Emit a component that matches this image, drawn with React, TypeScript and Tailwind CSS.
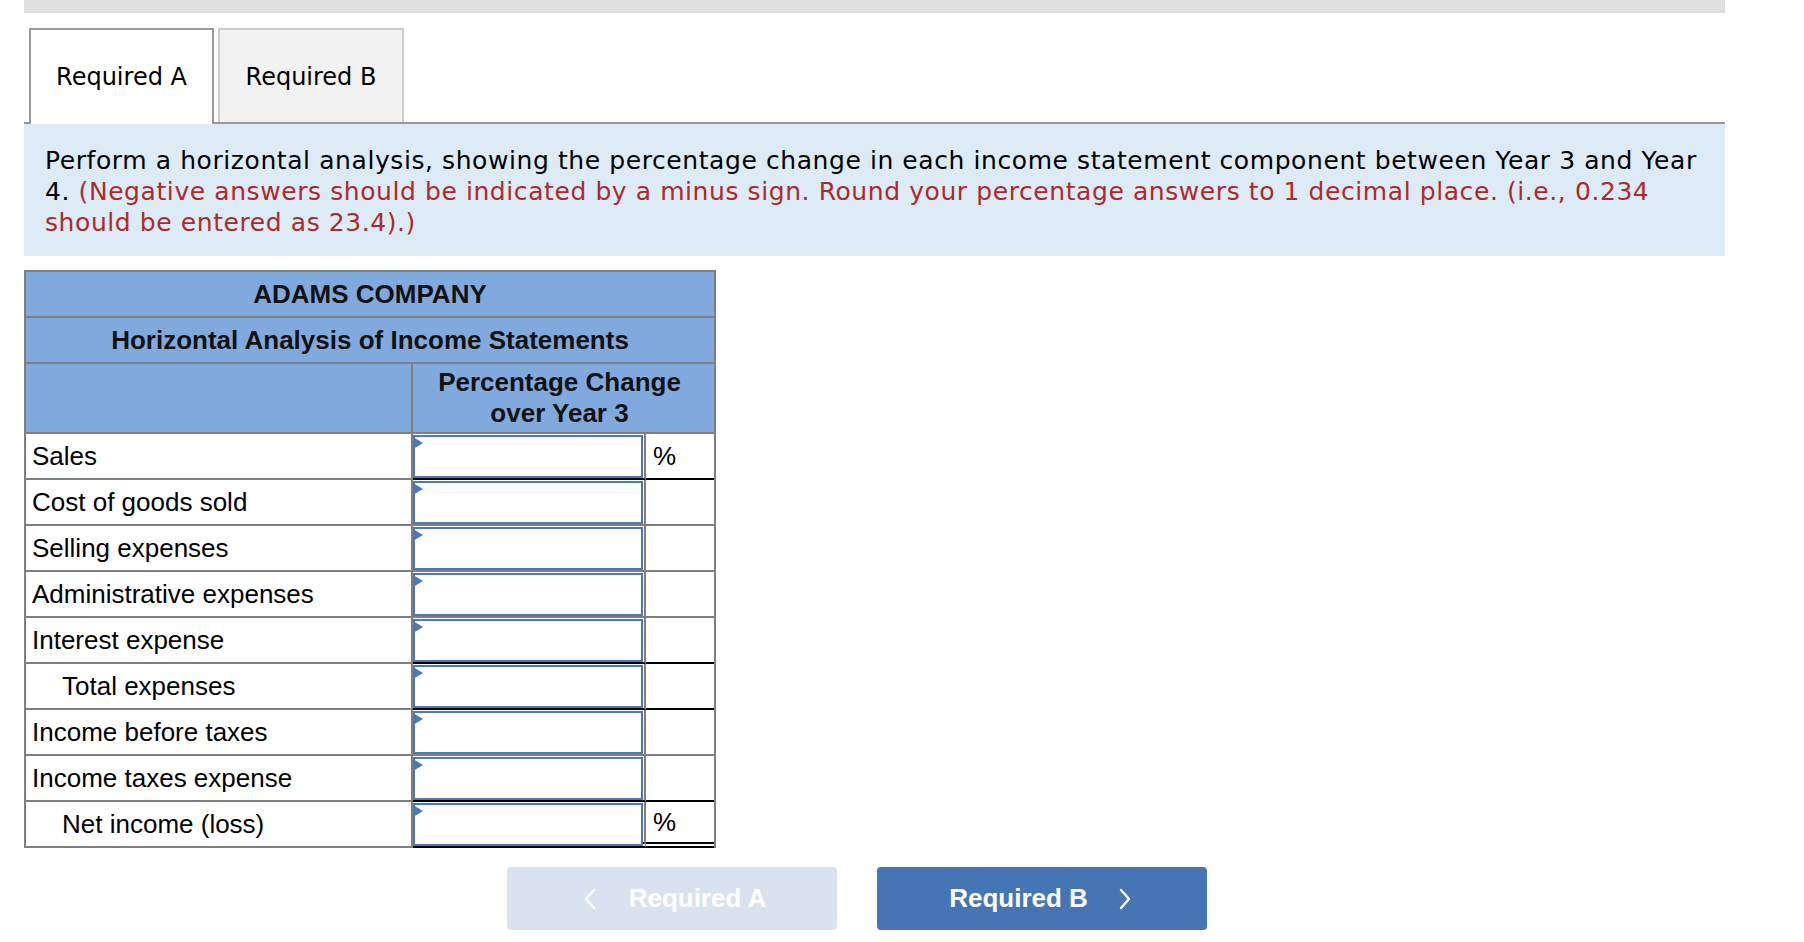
import clsx from "clsx";

type Row = {
  label: string;
  indent?: boolean;
  pct?: boolean;
  line?: "single" | "double";
};

const rows: Row[] = [
  { label: "Sales", pct: true, line: "single" },
  { label: "Cost of goods sold" },
  { label: "Selling expenses" },
  { label: "Administrative expenses" },
  { label: "Interest expense", line: "single" },
  { label: "Total expenses", indent: true, line: "single" },
  { label: "Income before taxes" },
  { label: "Income taxes expense", line: "single" },
  { label: "Net income (loss)", indent: true, pct: true, line: "double" },
];

const AnswerBox = () => (
  <div className="relative mt-[1px] mr-[1px] h-[43px] border-2 border-[#4a78b8] bg-white">
    <svg className="absolute -left-[2px] top-0" width="10" height="12" viewBox="0 0 10 12">
      <polygon points="0,0 10,6 0,12" fill="#4a78b8" />
    </svg>
  </div>
);

const TableRow = ({ row }: { row: Row }) => {
  const edge =
    row.line === "double"
      ? "border-b-[6px] border-double border-b-black"
      : row.line === "single"
        ? "border-b-2 border-b-black"
        : "border-b-2 border-b-[#7f7f7f]";
  return (
    <div className="flex h-[46px]">
      <div
        className={clsx(
          "flex w-[387px] items-center border-r-2 border-b-2 border-[#7f7f7f]",
          row.indent ? "pl-[36px]" : "pl-[6px]",
        )}
      >
        {row.label}
      </div>
      <div className={clsx("w-[233px] border-r-2 border-r-[#7f7f7f]", edge)}>
        <AnswerBox />
      </div>
      <div className={clsx("flex flex-1 items-center pl-[7px]", edge)}>
        {row.pct ? "%" : ""}
      </div>
    </div>
  );
};

const Chevron = ({ dir }: { dir: "left" | "right" }) => (
  <svg width="12" height="22" viewBox="0 0 12 22" fill="none">
    <polyline
      points={dir === "right" ? "2,2 10,11 2,20" : "10,2 2,11 10,20"}
      stroke="white"
      strokeWidth="2.4"
      strokeLinecap="round"
      strokeLinejoin="round"
    />
  </svg>
);

export default function App() {
  return (
    <div className="min-h-[942px] w-[1804px] bg-white text-black">
      <div className="ml-[24px] w-[1701px]">
        <div className="h-[13px] bg-[#e0e0e0]" />

        <div className="mt-[15px] flex items-end gap-[4px] border-b-2 border-[#999] pl-[5px] font-['DejaVu_Sans',Verdana,sans-serif] text-[24px]">
          <div className="-mb-[2px] flex h-[96px] w-[185px] items-center justify-center border-2 border-b-0 border-[#999] bg-white">
            Required A
          </div>
          <div className="flex h-[94px] w-[186px] items-center justify-center border-2 border-b-0 border-[#ccc] bg-[#f2f2f2] pt-[2px]">
            Required B
          </div>
        </div>

        <div className="bg-[#ddebf7] pt-[21px] pr-[14px] pb-[18px] pl-[21px] font-['DejaVu_Sans',Verdana,sans-serif] text-[25px] leading-[31px] tracking-[0.58px]">
          <p>
            Perform a horizontal analysis, showing the percentage change in each income statement
            component between Year 3 and Year 4.{" "}
            <span className="text-[#ae2a2a]">
              (Negative answers should be indicated by a minus sign. Round your percentage answers
              to 1 decimal place. (i.e., 0.234 should be entered as 23.4).)
            </span>
          </p>
        </div>

        <div className="mt-[14px] w-[692px] border-x-2 border-t-2 border-[#7f7f7f] font-['Liberation_Sans',Arial,sans-serif] text-[26px]">
          <div className="flex h-[46px] items-center justify-center border-b-2 border-[#7f7f7f] bg-[#80aade] font-bold text-[#111]">
            ADAMS COMPANY
          </div>
          <div className="flex h-[46px] items-center justify-center border-b-2 border-[#7f7f7f] bg-[#80aade] font-bold text-[#111]">
            Horizontal Analysis of Income Statements
          </div>
          <div className="flex h-[70px] border-b-2 border-[#7f7f7f] bg-[#80aade] font-bold text-[#111]">
            <div className="w-[387px] border-r-2 border-[#7f7f7f]" />
            <div className="flex flex-1 items-center justify-center pr-[8px] text-center leading-[31px]">
              Percentage Change
              <br />
              over Year 3
            </div>
          </div>
          {rows.map((row) => (
            <TableRow key={row.label} row={row} />
          ))}
        </div>

        <div className="mt-[19px] ml-[483px] flex gap-[40px] font-['Liberation_Sans',Arial,sans-serif] text-[26px] font-bold text-white">
          <button className="flex h-[63px] w-[330px] items-center justify-center gap-[33px] rounded-[4px] bg-[#d9e3ef] pl-[6px]">
            <Chevron dir="left" />
            Required A
          </button>
          <button className="flex h-[63px] w-[330px] items-center justify-center gap-[31px] rounded-[4px] bg-[#4575b4] pr-[4px]">
            Required B
            <Chevron dir="right" />
          </button>
        </div>
      </div>
    </div>
  );
}
